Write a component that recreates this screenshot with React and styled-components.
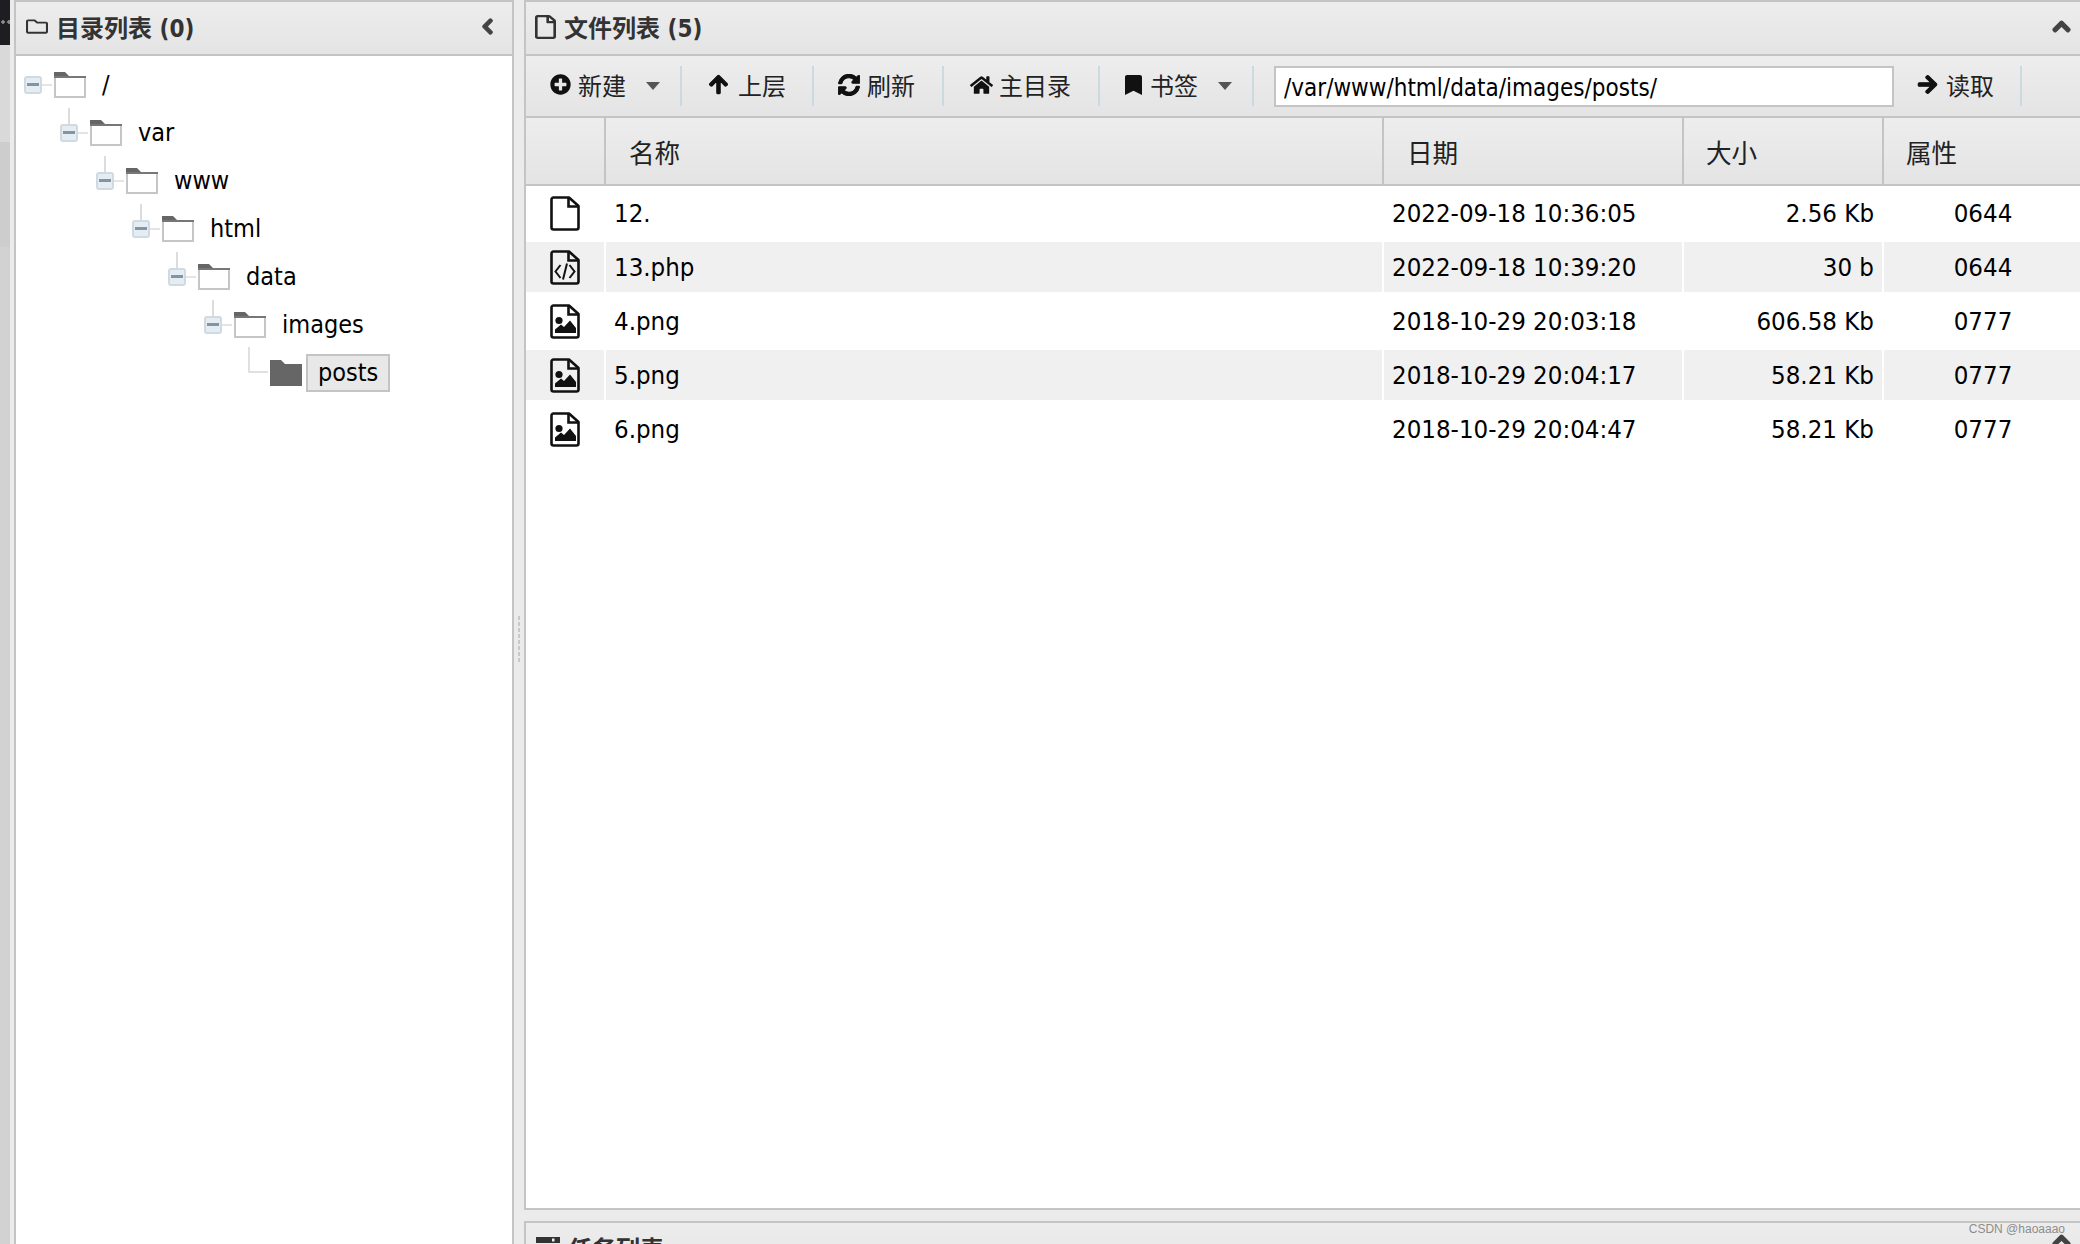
import React from 'react';
import styled, { createGlobalStyle } from 'styled-components';
import {
  FaPlusCircle, FaArrowUp, FaSyncAlt, FaHome, FaBookmark, FaArrowRight,
  FaChevronLeft, FaChevronUp, FaRegFolder, FaRegFile,
} from 'react-icons/fa';

const GlobalStyle = createGlobalStyle`
  html, body {
    margin: 0;
    padding: 0;
    background: #ebebeb;
    overflow: hidden;
  }
  * { box-sizing: border-box; }
`;

const FONT = `"DejaVu Sans Condensed", "Noto Sans", "Noto Sans CJK SC", sans-serif`;
const LINE = '#c4c4c4';
const BAR = 'linear-gradient(#ededed, #e4e4e4)';

const Page = styled.div`
  position: relative;
  display: flex;
  width: 2080px;
  height: 1244px;
  overflow: hidden;
  font-family: ${FONT};
  color: #000;
`;

const SideStrip = styled.div`
  width: 10px;
  flex: none;
  margin-right: 4px;
  display: flex;
  flex-direction: column;
`;

const StripPart = styled.div`
  height: ${(p) => p.$h};
  flex: ${(p) => (p.$h ? 'none' : 1)};
  background: ${(p) => p.$bg};
`;

const LeftPanel = styled.section`
  width: 500px;
  flex: none;
  display: flex;
  flex-direction: column;
  border: 2px solid ${LINE};
  border-bottom: none;
  background: #fff;
`;

const Splitter = styled.div`
  width: 10px;
  flex: none;
  display: flex;
  justify-content: center;
  align-items: center;
  padding-top: 34px;
  &::before {
    content: '';
    width: 2px;
    height: 46px;
    background: repeating-linear-gradient(#c8c8c8 0 4px, transparent 4px 6px);
  }
`;

const RightColumn = styled.div`
  flex: 1;
  display: flex;
  flex-direction: column;
  min-width: 0;
`;

const MainPanel = styled.section`
  height: 1210px;
  flex: none;
  display: flex;
  flex-direction: column;
  border: 2px solid ${LINE};
  border-right: none;
  background: #fff;
`;

const TaskPanel = styled.section`
  flex: none;
  height: 60px;
  margin-top: 11px;
  border: 2px solid ${LINE};
  border-right: none;
  border-bottom: none;
  background: ${BAR};
`;

const PanelHead = styled.header`
  height: 54px;
  flex: none;
  display: flex;
  align-items: center;
  gap: 8px;
  padding: 0 ${(p) => p.$right}px 3px ${(p) => p.$left}px;
  background: ${BAR};
  border-bottom: 2px solid ${LINE};
  color: #333;
  font-size: 24px;
  font-weight: bold;
`;

const HeadTitle = styled.span`
  flex: 1;
  white-space: nowrap;
`;

const HeadChevron = styled.span`
  display: flex;
  color: #444;
  margin-bottom: ${(p) => p.$raise || 0}px;
`;

const Tree = styled.div`
  padding: 5px 0 0 8px;
`;

const TreeRow = styled.div`
  height: 48px;
  display: flex;
  align-items: center;
  padding-left: ${(p) => p.$level * 36}px;
`;

const Expander = styled.span`
  position: relative;
  width: 18px;
  height: 18px;
  flex: none;
  margin-right: 12px;
  border: 2px solid #d0dae2;
  border-radius: 3px;
  background: #e6edf2;
  &::before {
    content: '';
    position: absolute;
    left: 1px;
    right: 1px;
    top: 5px;
    height: 3px;
    background: #8096a8;
  }
  &::after {
    content: '';
    position: absolute;
    left: 16px;
    top: 6px;
    width: 10px;
    height: 2px;
    background: #e4e4e4;
  }
`;

const UpLine = styled.span`
  position: absolute;
  left: 6px;
  top: -18px;
  width: 2px;
  height: 16px;
  background: #dcdcdc;
`;

const LeafLine = styled.span`
  width: 20px;
  height: 26px;
  flex: none;
  margin: -26px 2px 0 8px;
  border-left: 2px solid #e0e0e0;
  border-bottom: 2px solid #e0e0e0;
`;

const NodeLabel = styled.span`
  margin-left: 4px;
  padding: 0 10px;
  height: 38px;
  line-height: 34px;
  font-size: 25px;
  white-space: nowrap;
  border: 2px solid ${(p) => (p.$selected ? LINE : 'transparent')};
  background: ${(p) => (p.$selected ? '#e8e8e8' : 'transparent')};
`;

const Toolbar = styled.div`
  height: 62px;
  flex: none;
  display: flex;
  align-items: center;
  background: ${BAR};
  border-bottom: 2px solid ${LINE};
`;

const ToolButton = styled.div`
  height: 40px;
  display: flex;
  align-items: center;
  gap: ${(p) => p.$gap || 8}px;
  padding: 0 ${(p) => p.$right}px 3px ${(p) => p.$left}px;
  border-right: 2px solid #cbdae1;
  font-size: 24px;
  color: #222;
  white-space: nowrap;
`;

const Caret = styled.span`
  width: 0;
  height: 0;
  margin-left: ${(p) => p.$left}px;
  margin-top: 3px;
  border-left: 7px solid transparent;
  border-right: 7px solid transparent;
  border-top: 8px solid #555;
`;

const PathInput = styled.input`
  width: 620px;
  height: 41px;
  margin-left: 20px;
  padding: 3px 8px 0;
  border: 2px solid ${LINE};
  background: #fff;
  outline: none;
  font-family: ${FONT};
  font-size: 24px;
  color: #000;
`;

const TableGrid = `
  display: grid;
  grid-template-columns: 80px 778px 300px 200px 1fr;
`;

const TableHead = styled.div`
  ${TableGrid}
  height: 68px;
  flex: none;
  background: ${BAR};
  border-bottom: 2px solid ${LINE};
`;

const HeadCell = styled.div`
  display: flex;
  align-items: center;
  padding-left: ${(p) => p.$left || 0}px;
  border-right: ${(p) => (p.$last ? 'none' : `2px solid ${LINE}`)};
  font-size: 25.6px;
  color: #222;
`;

const Row = styled.div`
  ${TableGrid}
  height: 54px;
  padding: 2px 0;
`;

const Cell = styled.div`
  display: flex;
  align-items: center;
  justify-content: ${(p) => p.$align || 'flex-start'};
  padding: ${(p) => p.$pad || '0'};
  margin-right: ${(p) => (p.$last ? 0 : 2)}px;
  background: ${(p) => (p.$stripe ? '#f0f0f0' : 'transparent')};
  font-size: 25.6px;
  white-space: nowrap;
`;

const Watermark = styled.span`
  position: absolute;
  right: 15px;
  bottom: 8px;
  font-family: "Liberation Sans", Arial, sans-serif;
  font-size: 12px;
  color: #8c8c8c;
`;

const Folder = ({ filled }) => (
  <svg width="32" height="26" viewBox="0 0 32 26" style={{ flex: 'none' }}>
    <path d="M0 0h11l4 4H0z" fill="#666" />
    {filled ? (
      <rect x="0" y="4" width="32" height="22" fill="#666" />
    ) : (
      <>
        <rect x="1" y="5" width="30" height="20" fill="#fff" stroke="#c6c6c6" strokeWidth="2" />
        <path d="M0 5h32" stroke="#777" strokeWidth="2" />
      </>
    )}
  </svg>
);

// the file icons of the list, drawn because they are wider than the packaged ones
const FileIcon = ({ kind }) => (
  <svg width="30" height="35" viewBox="0 0 30 35" fill="none" stroke="#111" strokeWidth="2.6">
    <path d="M1.5 3.5a2 2 0 0 1 2-2H19l9.5 8.5v21.5a2 2 0 0 1-2 2h-23a2 2 0 0 1-2-2z" strokeLinejoin="round" />
    <path d="M18.5 2v8.5h10" />
    {kind === 'code' && (
      <path d="M10.500 15l-5 6.500 5 6.500M19.500 15l5 6.500-5 6.500M17 13.500l-4 16" strokeWidth="2" />
    )}
    {kind === 'image' && (
      <>
        <circle cx="9" cy="16.5" r="3.6" fill="#111" stroke="none" />
        <path d="M5 29v-3.500l6-5 3 2.500 6-6.500 6 7.500V29z" fill="#111" stroke="none" />
      </>
    )}
  </svg>
);

const TaskIcon = () => (
  <svg width="24" height="24" viewBox="0 0 24 24">
    <path d="M0 1h24v6H0zM0 9h24v6H0zM0 17h24v6H0z" fill="#333" />
    <path d="M16 2.500h2.500v3H16z" fill="#eee" />
  </svg>
);

const bold = { stroke: 'currentColor', strokeWidth: 30 };
const heavy = { stroke: 'currentColor', strokeWidth: 55 };

const nodes = ['/', 'var', 'www', 'html', 'data', 'images'];

const files = [
  { name: '12.', kind: 'plain', date: '2022-09-18 10:36:05', size: '2.56 Kb', perm: '0644' },
  { name: '13.php', kind: 'code', date: '2022-09-18 10:39:20', size: '30 b', perm: '0644' },
  { name: '4.png', kind: 'image', date: '2018-10-29 20:03:18', size: '606.58 Kb', perm: '0777' },
  { name: '5.png', kind: 'image', date: '2018-10-29 20:04:17', size: '58.21 Kb', perm: '0777' },
  { name: '6.png', kind: 'image', date: '2018-10-29 20:04:47', size: '58.21 Kb', perm: '0777' },
];

export default function App() {
  return (
    <Page>
      <GlobalStyle />
      <SideStrip>
        <StripPart $h="45px" $bg="radial-gradient(circle, #8a8a8a 1.5px, transparent 2px) 0 19px / 6px 6px repeat-x, #1e1e22" />
        <StripPart $h="97px" $bg="#d9d9d9" />
        <StripPart $h="105px" $bg="#cdcdcd" />
        <StripPart $bg="#d2d2d2" />
      </SideStrip>

      <LeftPanel>
        <PanelHead $left={10} $right={16}>
          <FaRegFolder style={{ width: 22, height: 19 }} preserveAspectRatio="none" />
          <HeadTitle>目录列表 (0)</HeadTitle>
          <HeadChevron>
            <FaChevronLeft size={17} {...heavy} />
          </HeadChevron>
        </PanelHead>
        <Tree>
          {nodes.map((name, i) => (
            <TreeRow key={name} $level={i}>
              <Expander>{i > 0 && <UpLine />}</Expander>
              <Folder />
              <NodeLabel>{name}</NodeLabel>
            </TreeRow>
          ))}
          <TreeRow $level={6}>
            <LeafLine />
            <Folder filled />
            <NodeLabel $selected>posts</NodeLabel>
          </TreeRow>
        </Tree>
      </LeftPanel>

      <Splitter />

      <RightColumn>
        <MainPanel>
          <PanelHead $left={9} $right={9}>
            <FaRegFile style={{ width: 21, height: 24 }} preserveAspectRatio="none" />
            <HeadTitle>文件列表 (5)</HeadTitle>
            <HeadChevron>
              <FaChevronUp size={19} {...heavy} />
            </HeadChevron>
          </PanelHead>
          <Toolbar>
            <ToolButton $left={24} $right={20} $gap={7}>
              <FaPlusCircle size={21} color="#111" />新建<Caret $left={13} />
            </ToolButton>
            <ToolButton $left={26} $right={26} $gap={9}>
              <FaArrowUp size={21} color="#111" {...bold} />上层
            </ToolButton>
            <ToolButton $left={24} $right={27} $gap={7}>
              <FaSyncAlt size={22} color="#111" stroke="#111" strokeWidth={25} />刷新
            </ToolButton>
            <ToolButton $left={26} $right={27} $gap={6}>
              <FaHome style={{ width: 23, height: 20 }} color="#111" preserveAspectRatio="none" />主目录
            </ToolButton>
            <ToolButton $left={25} $right={20}>
              <FaBookmark style={{ width: 17, height: 20 }} color="#111" preserveAspectRatio="none" />书签<Caret $left={12} />
            </ToolButton>
            <PathInput readOnly value="/var/www/html/data/images/posts/" />
            <ToolButton $left={23} $right={26}>
              <FaArrowRight size={21} color="#111" {...bold} />读取
            </ToolButton>
          </Toolbar>
          <TableHead>
            <HeadCell />
            <HeadCell $left={23}>名称</HeadCell>
            <HeadCell $left={23}>日期</HeadCell>
            <HeadCell $left={22}>大小</HeadCell>
            <HeadCell $left={22} $last>属性</HeadCell>
          </TableHead>
          {files.map((f, i) => {
            const stripe = i % 2 === 1;
            return (
              <Row key={f.name}>
                <Cell $stripe={stripe} $align="center">
                  <FileIcon kind={f.kind} />
                </Cell>
                <Cell $stripe={stripe} $pad="0 0 0 8px">{f.name}</Cell>
                <Cell $stripe={stripe} $pad="0 0 0 8px">{f.date}</Cell>
                <Cell $stripe={stripe} $align="flex-end" $pad="0 8px 0 0">{f.size}</Cell>
                <Cell $stripe={stripe} $align="center" $pad="0 0 0 2px" $last>{f.perm}</Cell>
              </Row>
            );
          })}
        </MainPanel>
        <TaskPanel>
          <PanelHead $left={10} $right={9}>
            <TaskIcon />
            <HeadTitle>任务列表</HeadTitle>
            <HeadChevron $raise={14}>
              <FaChevronUp size={19} {...heavy} />
            </HeadChevron>
          </PanelHead>
        </TaskPanel>
      </RightColumn>

      <Watermark>CSDN @haoaaao</Watermark>
    </Page>
  );
}
